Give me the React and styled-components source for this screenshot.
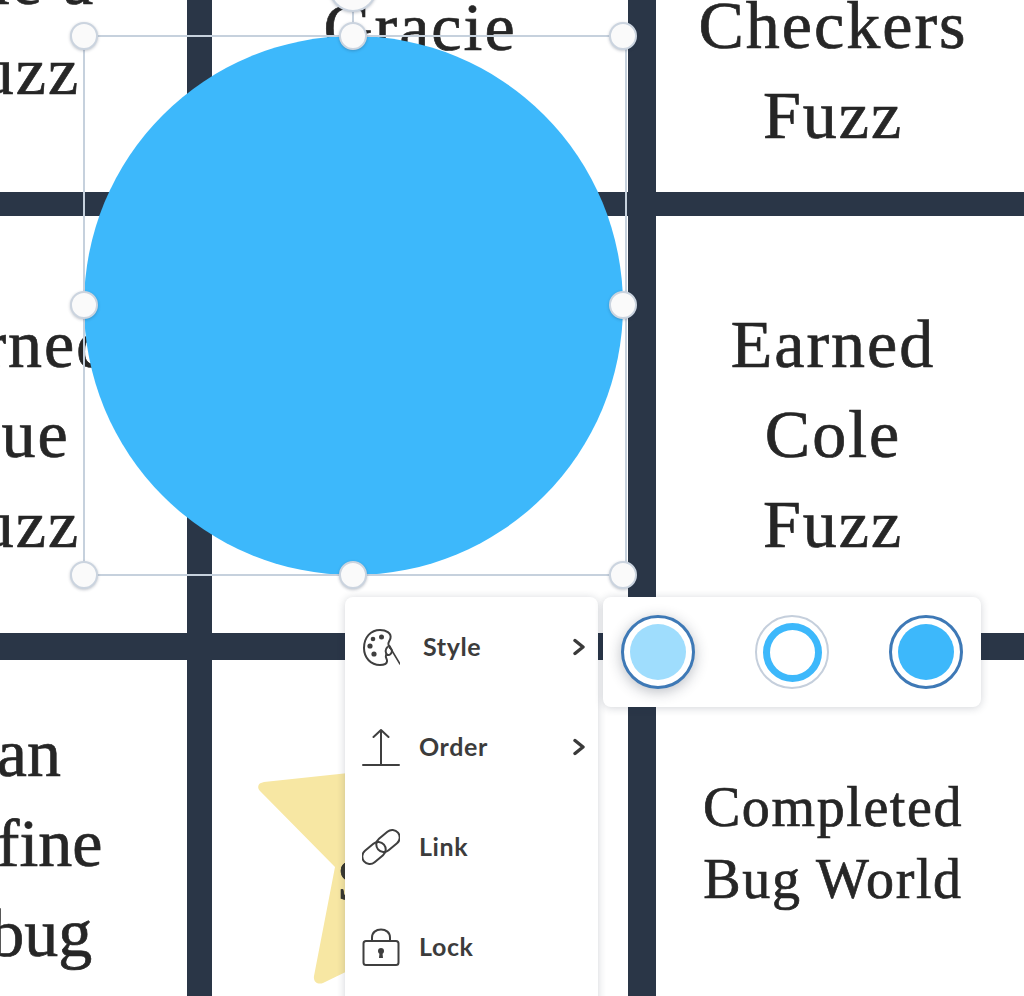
import React from "react";
import styled, { createGlobalStyle } from "styled-components";

const Global = createGlobalStyle`
  html, body { margin: 0; padding: 0; background: #fff; }
`;

const Page = styled.div`
  position: relative;
  width: 1024px;
  height: 996px;
  overflow: hidden;
  background: #fff;
`;

const Board = styled.div`
  display: grid;
  grid-template-columns: 354px 25px 416px 28px 368px;
  grid-template-rows: 192px 24px 417px 27px 336px;
  margin-left: -167px;
  width: 1191px;
  height: 996px;
  background: #2a3647;
  filter: blur(0.6px);
`;

const Cell = styled.div`
  grid-column: ${(p) => p.$col};
  grid-row: ${(p) => p.$row};
  background: #fff;
  display: flex;
  flex-direction: column;
  overflow: hidden;
  position: relative;
  align-items: center;
  justify-content: ${(p) => (p.$end ? "flex-end" : "center")};
  padding: ${(p) => p.$padT || 0}px ${(p) => p.$padR || 0}px ${(p) => p.$padB || 0}px 0;
  box-sizing: border-box;
  font-family: "Liberation Serif", "DejaVu Serif", serif;
  color: #262626;
  font-size: 68px;
  line-height: 90px;
  letter-spacing: ${(p) => (p.$tight ? 0 : 2)}px;
  -webkit-text-stroke: 0.7px #262626;
  text-align: center;
`;

const SmallText = styled.div`
  font-size: 56px;
  line-height: 72px;
  letter-spacing: 1.6px;
`;

const Line = styled.div`
  white-space: nowrap;
`;

const Star = styled.svg`
  position: absolute;
  left: 46px;
  top: 112px;
  width: 100px;
  height: 224px;
`;

const StarLetter = styled.span`
  position: absolute;
  left: 125px;
  top: 190px;
  font-size: 60px;
  line-height: 60px;
  color: #3a3a30;
`;

const Shape = styled.div`
  position: absolute;
  left: 84px;
  top: 36px;
  width: 539px;
  height: 539px;
  border-radius: 50%;
  background: #3db8fb;
`;

const Selection = styled.div`
  position: absolute;
  left: 82.5px;
  top: 34.5px;
  width: 544px;
  height: 541.5px;
  border: 2px solid #c6d1dd;
  box-sizing: border-box;
`;

const Stem = styled.div`
  position: absolute;
  left: 352px;
  top: 10px;
  width: 2px;
  height: 25px;
  background: #c6d1dd;
`;

const Handle = styled.div`
  position: absolute;
  left: ${(p) => p.$x - (p.$size || 28) / 2}px;
  top: ${(p) => p.$y - (p.$size || 28) / 2}px;
  width: ${(p) => p.$size || 28}px;
  height: ${(p) => p.$size || 28}px;
  border-radius: 50%;
  background: #fafafa;
  border: 2px solid #cbd4df;
  box-sizing: border-box;
  box-shadow: 0 1px 3px rgba(40, 55, 80, 0.28);
`;

const Menu = styled.div`
  position: absolute;
  left: 345px;
  top: 597px;
  width: 253px;
  height: 420px;
  background: #fff;
  border-radius: 8px;
  box-shadow: 0 1px 8px rgba(30, 40, 60, 0.2);
  display: flex;
  flex-direction: column;
`;

const Item = styled.div`
  display: flex;
  align-items: center;
  height: 100px;
  flex: none;
  padding: 0 13px 0 17px;
  font-family: "Lato", "Noto Sans", sans-serif;
  font-weight: 700;
  font-size: 25px;
  letter-spacing: 0.6px;
  color: #3c3c3c;
`;

const IconSvg = styled.svg`
  width: 38px;
  height: 38px;
  flex: none;
  fill: none;
  stroke: #3f3f3f;
  stroke-width: 2;
  stroke-linecap: round;
  stroke-linejoin: round;
`;

const ItemLabel = styled.span`
  flex: 1;
  margin-left: ${(p) => p.$gap || 19}px;
  padding-bottom: 2px;
  line-height: 1;
`;

const Chevron = styled.svg`
  width: 12px;
  height: 18px;
  fill: none;
  stroke: #3a3a3a;
  stroke-width: 3.4;
  stroke-linecap: round;
  stroke-linejoin: round;
`;

const Popover = styled.div`
  position: absolute;
  left: 603px;
  top: 597px;
  width: 378px;
  height: 110px;
  box-sizing: border-box;
  padding: 18px;
  background: #fff;
  border-radius: 8px;
  box-shadow: 0 1px 8px rgba(30, 40, 60, 0.2);
  display: flex;
  justify-content: space-between;
  align-items: flex-start;
`;

const Swatch = styled.div`
  width: 74px;
  height: 74px;
  box-sizing: border-box;
  border-radius: 50%;
  border: ${(p) => (p.$active ? "3.5px solid #3e79b6" : "2px solid #c5cfdc")};
  background: #fff;
  display: flex;
  align-items: center;
  justify-content: center;
  box-shadow: ${(p) => (p.$shadow ? "0 3px 14px rgba(30,40,60,0.3)" : "none")};
`;

const SwatchFill = styled.div`
  width: ${(p) => (p.$outline ? 59 : 56)}px;
  height: ${(p) => (p.$outline ? 59 : 56)}px;
  box-sizing: border-box;
  border-radius: 50%;
  background: ${(p) => (p.$outline ? "#fff" : p.$color)};
  border: ${(p) => (p.$outline ? `7px solid ${p.$color}` : "none")};
`;

const ChevronRight = () => (
  <Chevron viewBox="0 0 12 18">
    <path d="M2 2.5 L10 9 L2 15.5" />
  </Chevron>
);

const PaletteIcon = () => (
  <IconSvg viewBox="0 0 38 38">
    <path d="M24 27 C23 30 25.5 31 25 33.5 C24.5 36.5 21 37 18 37 C9 37 2 30 2 20 C2 9 9 2 18 2 C24 2 29.5 5 28.5 10 C28 13 25.5 14 26.5 17 L28 20" />
    <path d="M25.5 19 C23 21 23 25 25.5 27 C28 27.5 30 25 30 22.5 L27.5 18" />
    <path d="M29 21 L38 36" strokeWidth="1.6" />
    <circle cx="19.5" cy="9" r="2.5" fill="#3f3f3f" stroke="none" />
    <circle cx="11" cy="11" r="2.3" fill="#3f3f3f" stroke="none" />
    <circle cx="8" cy="18" r="2.6" fill="#3f3f3f" stroke="none" />
    <circle cx="12" cy="26" r="2.6" fill="#3f3f3f" stroke="none" />
  </IconSvg>
);

const OrderIcon = () => (
  <IconSvg viewBox="0 0 38 38">
    <path d="M1 37 H37 M19 37 V2 M11.5 9 L19 2 L26.5 9" />
  </IconSvg>
);

const LinkIcon = () => (
  <IconSvg viewBox="0 0 38 38">
    <rect x="-13" y="-7.5" width="26" height="15" rx="7.5" transform="translate(12 25) rotate(-40)" />
    <rect x="-13" y="-7.5" width="26" height="15" rx="7.5" transform="translate(26 13) rotate(-40)" />
  </IconSvg>
);

const LockIcon = () => (
  <IconSvg viewBox="0 0 38 38">
    <rect x="1.5" y="13" width="35" height="24" rx="2.5" />
    <path d="M10 13 V9.5 C10 4.5 14 1.5 19 1.5 C24 1.5 28 4.5 28 9.5 V13" />
    <circle cx="19" cy="23" r="3" fill="#3f3f3f" stroke="none" />
    <path d="M17.6 24 H20.4 L21 30 H17 Z" fill="#3f3f3f" stroke="none" />
  </IconSvg>
);

const handles = [
  [84, 36], [353, 36], [623, 36],
  [84, 305], [623, 305],
  [84, 575], [353, 575], [623, 575],
];

export default function App() {
  return (
    <Page>
      <Global />
      <Board>
        <Cell $col={1} $row={1} $end $padB={76}>
          <Line>Due a</Line>
          <Line>Fuzz</Line>
        </Cell>
        <Cell $col={3} $row={1} $end $padB={120}>
          <Line>Gracie</Line>
        </Cell>
        <Cell $col={5} $row={1} $end $padR={14} $padB={32}>
          <Line>Checkers</Line>
          <Line>Fuzz</Line>
        </Cell>

        <Cell $col={1} $row={3} $padT={18}>
          <Line>Earned</Line>
          <Line>Due</Line>
          <Line>Fuzz</Line>
        </Cell>
        <Cell $col={3} $row={3} />
        <Cell $col={5} $row={3} $padR={14} $padT={18}>
          <Line>Earned</Line>
          <Line>Cole</Line>
          <Line>Fuzz</Line>
        </Cell>

        <Cell $col={1} $row={5} $padT={30} $tight>
          <Line>Fan</Line>
          <Line>Define</Line>
          <Line>A bug</Line>
        </Cell>
        <Cell $col={3} $row={5}>
          <Star viewBox="0 0 100 224">
            <path
              d="M3 11 C0 12 -1 16 2 19 L77 95 L56 204 C55 210 60 213 65 211 L100 194 V0 L6 10 Z"
              fill="#f7e7a3"
            />
          </Star>
          <StarLetter>S</StarLetter>
        </Cell>
        <Cell $col={5} $row={5} $padR={14} $padT={30}>
          <SmallText>
            <Line>Completed</Line>
            <Line>Bug World</Line>
          </SmallText>
        </Cell>
      </Board>

      <Shape />
      <Selection />
      <Stem />
      <Handle $x={353} $y={-12} $size={48} />
      {handles.map(([x, y]) => (
        <Handle key={`${x}-${y}`} $x={x} $y={y} />
      ))}

      <Menu>
        <Item>
          <PaletteIcon />
          <ItemLabel $gap={23}>Style</ItemLabel>
          <ChevronRight />
        </Item>
        <Item>
          <OrderIcon />
          <ItemLabel>Order</ItemLabel>
          <ChevronRight />
        </Item>
        <Item>
          <LinkIcon />
          <ItemLabel>Link</ItemLabel>
        </Item>
        <Item>
          <LockIcon />
          <ItemLabel>Lock</ItemLabel>
        </Item>
      </Menu>

      <Popover>
        <Swatch $active $shadow>
          <SwatchFill $color="#9fddfd" />
        </Swatch>
        <Swatch>
          <SwatchFill $outline $color="#3db8fb" />
        </Swatch>
        <Swatch $active>
          <SwatchFill $color="#3db8fb" />
        </Swatch>
      </Popover>
    </Page>
  );
}
